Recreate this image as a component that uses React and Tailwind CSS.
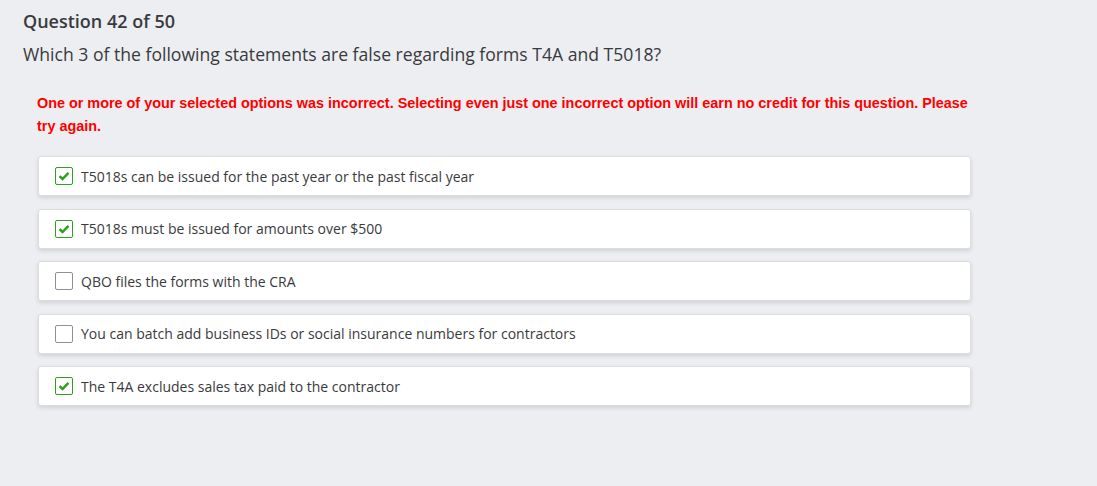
import React from "react";

const options = [
  { text: "T5018s can be issued for the past year or the past fiscal year", checked: true },
  { text: "T5018s must be issued for amounts over $500", checked: true },
  { text: "QBO files the forms with the CRA", checked: false },
  { text: "You can batch add business IDs or social insurance numbers for contractors", checked: false },
  { text: "The T4A excludes sales tax paid to the contractor", checked: true },
];

const Checkbox = ({ checked }) => (
  <div
    className={
      "w-[18px] h-[18px] rounded-[2px] border bg-white flex items-center justify-center shrink-0 " +
      (checked ? "border-[#2ca01c]" : "border-[#8d9096]")
    }
  >
    {checked && (
      <svg width="12" height="10" viewBox="0 0 12 10">
        <path d="M1.5 5.2 L4.5 8 L10.5 1.8" fill="none" stroke="#2ca01c" strokeWidth="2.4" />
      </svg>
    )}
  </div>
);

const App = () => {
  return (
    <div
      className="w-full min-h-[486px] bg-[#eceef1] text-[#393a3d] pt-[9px]"
      style={{ fontFamily: "'Open Sans', sans-serif" }}
    >
      <div className="pl-[23px]">
        <h1 className="text-[18px] font-semibold leading-[24px]">Question 42 of 50</h1>
        <p className="text-[17.6px] leading-[24px] mt-[9px]">
          Which 3 of the following statements are false regarding forms T4A and T5018?
        </p>
      </div>
      <div className="pl-[37px] w-[975px] mt-[26px]">
        <p
          className="text-[14.4px] font-bold leading-[23px] text-[#ff0000]"
          style={{ fontFamily: "'Liberation Sans', Arial, sans-serif" }}
        >
          One or more of your selected options was incorrect. Selecting even just one incorrect option will earn no
          credit for this question. Please try again.
        </p>
      </div>
      <div className="ml-[38px] w-[933px] mt-[18px] flex flex-col gap-[12.5px]">
        {options.map((o) => (
          <div
            key={o.text}
            className="h-[40px] bg-white rounded-[3px] border border-[#dcdde0] shadow-[0_2px_4px_rgba(0,0,0,0.12)] flex items-center gap-[8px] pl-[16px]"
          >
            <Checkbox checked={o.checked} />
            <span className="text-[14px]">{o.text}</span>
          </div>
        ))}
      </div>
    </div>
  );
};

export default App;
